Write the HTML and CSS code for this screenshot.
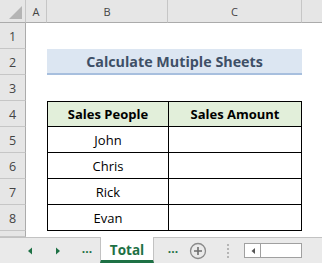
FILE: index.html
```html
<!DOCTYPE html>
<html>
<head>
<meta charset="utf-8">
<link rel="stylesheet" href="styles.css">
</head>
<body>
<div class="app">
  <div class="sheet">
    <div class="corner"><svg width="26" height="23" viewBox="0 0 26 23"><polygon points="22,6 22,19 9,19" fill="#b4b4b4"/></svg></div>
    <div class="colhead">A</div>
    <div class="colhead">B</div>
    <div class="colhead">C</div>
    <div class="colhead last"></div>

    <div class="rowhead">1</div><div class="cell"></div><div class="cell"></div><div class="cell"></div><div class="cell"></div>
    <div class="rowhead">2</div><div class="cell"></div><div class="title">Calculate Mutiple Sheets</div><div class="cell"></div>
    <div class="rowhead">3</div><div class="cell"></div><div class="cell"></div><div class="cell"></div><div class="cell"></div>
    <div class="rowhead">4</div><div class="cell"></div><div class="th l">Sales People</div><div class="th r">Sales Amount</div><div class="cell"></div>
    <div class="rowhead">5</div><div class="cell"></div><div class="td l">John</div><div class="td r"></div><div class="cell"></div>
    <div class="rowhead">6</div><div class="cell"></div><div class="td l">Chris</div><div class="td r"></div><div class="cell"></div>
    <div class="rowhead">7</div><div class="cell"></div><div class="td l">Rick</div><div class="td r"></div><div class="cell"></div>
    <div class="rowhead">8</div><div class="cell"></div><div class="td l">Evan</div><div class="td r"></div><div class="cell"></div>
    <div class="rowhead"></div><div class="cell"></div><div class="cell"></div><div class="cell"></div><div class="cell"></div>
  </div>
  <div class="tabbar">
    <div class="nav">
      <svg width="8" height="8" viewBox="0 0 8 8"><polygon points="6,0.5 6,7.5 2,4" fill="#1e7145"/></svg>
    </div>
    <div class="nav">
      <svg width="8" height="8" viewBox="0 0 8 8"><polygon points="2,0.5 2,7.5 6,4" fill="#1e7145"/></svg>
    </div>
    <div class="dots">...</div>
    <div class="tab">Total</div>
    <div class="dots dots2">...</div>
    <div class="plus">
      <svg width="18" height="18" viewBox="0 0 18 18"><circle cx="9" cy="9" r="7.5" fill="none" stroke="#8a8a8a" stroke-width="1.3"/><path d="M9 5v8M5 9h8" stroke="#6e6e6e" stroke-width="1.6"/></svg>
    </div>
    <div class="sep"></div>
    <div class="scroll">
      <div class="sbtn"><svg width="6" height="8" viewBox="0 0 6 8"><polygon points="5,1 5,7 1.5,4" fill="#555"/></svg></div>
      <div class="thumb"></div>
    </div>
  </div>
</div>
</body>
</html>
```
FILE: styles.css
```css
html, body {
  margin: 0;
  padding: 0;
  background: #ffffff;
}
.app {
  width: 322px;
  height: 263px;
  overflow: hidden;
  font-family: "Open Sans", "Liberation Sans", sans-serif;
}
.sheet {
  display: grid;
  grid-template-columns: 26px 21px 121px 134px 20px;
  grid-template-rows: 23px repeat(8, 26px) 6px;
  height: 237px;
}
.corner {
  background: #e6e6e6;
  border-right: 1px solid #c6c6c6;
  border-bottom: 1px solid #ababab;
  box-sizing: border-box;
}
.corner svg { display: block; }
.colhead {
  background: #e6e6e6;
  border-right: 1px solid #c6c6c6;
  border-bottom: 1px solid #ababab;
  box-sizing: border-box;
  font-size: 11px;
  color: #444;
  display: flex;
  align-items: center;
  justify-content: center;
}
.colhead.last { border-right: none; }
.rowhead {
  background: #e6e6e6;
  border-right: 1px solid #ababab;
  border-bottom: 1px solid #c6c6c6;
  box-sizing: border-box;
  font-size: 12.5px;
  color: #444;
  display: flex;
  align-items: center;
  justify-content: center;
  padding-top: 2px;
}
.cell { background: #fff; }
.title {
  grid-column: 3 / span 2;
  background: #dce6f2;
  border-bottom: 2px solid #a7bfde;
  box-sizing: border-box;
  color: #3e4f66;
  font-weight: 700;
  font-size: 14.3px;
  display: flex;
  align-items: center;
  justify-content: center;
  padding-top: 1px;
}
.th, .td {
  box-sizing: border-box;
  border-bottom: 1px solid #000;
  border-left: 1px solid #000;
  display: flex;
  align-items: center;
  justify-content: center;
  font-size: 13px;
  color: #000;
}
.th {
  background: #e2efda;
  border-top: 1px solid #000;
  font-weight: 700;
}
.r { border-right: 1px solid #000; }
.tabbar {
  height: 26px;
  background: #eaeaea;
  border-top: 1px solid #c2c2c2;
  box-sizing: border-box;
  display: flex;
  align-items: center;
}
.nav {
  width: 28px;
  display: flex;
  justify-content: center;
  align-items: center;
}
.nav:first-child { margin-left: 16px; }
.nav svg { display: block; }
.dots {
  width: 14px;
  margin-left: 8px;
  color: #1e7145;
  font-weight: 700;
  font-size: 12px;
  line-height: 12px;
  text-align: center;
  padding-bottom: 4px;
}
.dots2 {
  margin-left: 12px;
}
.tab {
  align-self: stretch;
  width: 54px;
  margin-left: 6px;
  margin-top: -1px;
  background: #ffffff;
  border-left: 1px solid #c2c2c2;
  border-right: 1px solid #c2c2c2;
  border-bottom: 3px solid #1e7145;
  box-sizing: border-box;
  display: flex;
  align-items: center;
  justify-content: center;
  color: #1e7145;
  font-weight: 700;
  font-size: 13.5px;
  padding-top: 2px;
}
.plus {
  margin-left: 9px;
  display: flex;
}
.plus svg { display: block; }
.sep {
  width: 0;
  height: 14px;
  margin-left: 20px;
  border-left: 2px dotted #b5b5b5;
}
.scroll {
  margin-left: 15px;
  width: 58px;
  height: 15px;
  display: flex;
  border: 1px solid #a0a0a0;
  box-sizing: border-box;
  background: #fff;
}
.sbtn {
  width: 15px;
  border-right: 1px solid #a0a0a0;
  display: flex;
  align-items: center;
  justify-content: center;
}
.sbtn svg { display: block; }
.thumb { flex: 1; }
```
